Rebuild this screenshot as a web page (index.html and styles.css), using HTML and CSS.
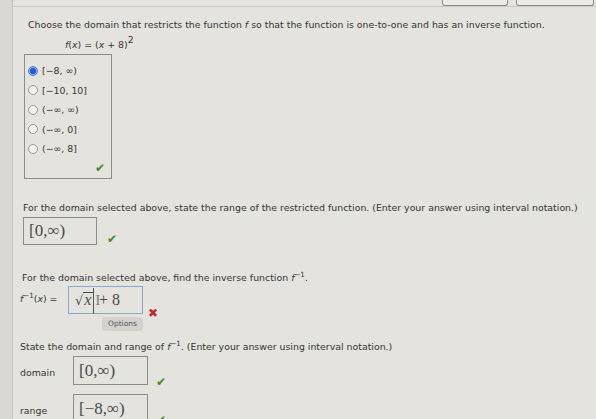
FILE: index.html
```html
<!DOCTYPE html>
<html>
<head>
<meta charset="utf-8">
<link rel="stylesheet" href="styles.css">
</head>
<body>
<div class="page">
  <div class="sidebar"></div>
  <div class="content">
    <div class="topbar">
      <div class="tbtn tbtn1"></div>
      <div class="tbtn tbtn2"></div>
    </div>
    <p class="q q1">Choose the domain that restricts the function <i>f</i> so that the function is one-to-one and has an inverse function.</p>
    <p class="fx"><i>f</i>(<i>x</i>) = (<i>x</i> + 8)<sup>2</sup></p>
    <div class="choices">
      <div class="opt"><span class="radio on"></span><span>[−8, ∞)</span></div>
      <div class="opt"><span class="radio"></span><span>[−10, 10]</span></div>
      <div class="opt"><span class="radio"></span><span>(−∞, ∞)</span></div>
      <div class="opt"><span class="radio"></span><span>(−∞, 0]</span></div>
      <div class="opt"><span class="radio"></span><span>(−∞, 8]</span></div>
      <div class="choice-foot"><span class="check">✔</span></div>
    </div>
    <p class="q q2">For the domain selected above, state the range of the restricted function. (Enter your answer using interval notation.)</p>
    <div class="ansrow r1">
      <div class="ans">[0,∞)</div>
      <span class="check">✔</span>
    </div>
    <p class="q q3">For the domain selected above, find the inverse function <i>f</i><sup>−1</sup>.</p>
    <div class="invrow">
      <span class="lbl-f"><i>f</i><sup>−1</sup>(<i>x</i>) =</span>
      <div class="invcol">
        <div class="ans active"><span class="rad">√<span class="radx">x</span></span><span class="ibeam">I</span>+ 8</div>
        <div class="optbtn">Options</div>
      </div>
      <span class="cross">✖</span>
    </div>
    <p class="q q4">State the domain and range of <i>f</i><sup>−1</sup>. (Enter your answer using interval notation.)</p>
    <div class="dr">
      <span class="lbl">domain</span>
      <div class="ans">[0,∞)</div>
      <span class="check">✔</span>
    </div>
    <div class="dr dr2">
      <span class="lbl">range</span>
      <div class="ans">[−8,∞)</div>
      <span class="check">✔</span>
    </div>
  </div>
</div>
</body>
</html>
```
FILE: styles.css
```css
html, body {
  margin: 0;
  padding: 0;
  background: #e4e3de;
  height: 100%;
  overflow: hidden;
}
.page {
  display: flex;
  height: 419px;
  font-family: "DejaVu Sans", Verdana, sans-serif;
  font-size: 9.4px;
  color: #353535;
}
.sidebar {
  width: 12px;
  background: #d9d8d3;
  border-right: 1px solid #c2c1bc;
  flex: none;
}
.content {
  flex: 1;
  display: flex;
  flex-direction: column;
  align-items: flex-start;
}
.topbar {
  align-self: stretch;
  height: 9px;
  border-bottom: 1px solid #c9c8c3;
  display: flex;
  justify-content: flex-end;
  gap: 8px;
  padding-right: 2px;
}
.tbtn {
  height: 5px;
  border: 1px solid #8c8b88;
  border-top: none;
  border-radius: 0 0 3px 3px;
  background: #ebeae6;
}
.tbtn1 { width: 64px; }
.tbtn2 { width: 76px; }
p { margin: 0; }
i { font-style: italic; }
sup { font-size: 0.75em; line-height: 0; vertical-align: 0.5em; }
.q { white-space: nowrap; line-height: 12px; }
.q1 { margin: 12px 0 0 15px; }
.fx { margin: 8px 0 0 52px; line-height: 12px; }
.fx sup { font-size: 1em; }
.choices {
  margin: 3px 0 0 11px;
  width: 86px;
  border: 1px solid #8d8c89;
  padding: 6px 0 0 0;
  display: flex;
  flex-direction: column;
}
.opt {
  display: flex;
  align-items: center;
  gap: 4px;
  height: 19.5px;
  padding-left: 3px;
}
.radio {
  width: 8px;
  height: 8px;
  border-radius: 50%;
  border: 1px solid #9a9a98;
  background: #f3f2ee;
  flex: none;
}
.radio.on {
  border-color: #4d78d6;
  background: radial-gradient(circle, #1f5bd8 0 2.8px, #9bb6ee 3.4px);
}
.choice-foot {
  height: 19px;
  display: flex;
  justify-content: flex-end;
  align-items: flex-start;
  padding-right: 6px;
  padding-top: 3px;
  box-sizing: border-box;
}
.check {
  color: #3f8c2c;
  font-size: 12px;
  line-height: 12px;
}
.q2 { margin: 23px 0 0 10px; }
.ansrow {
  display: flex;
  align-items: flex-end;
  gap: 10px;
  margin: 3px 0 0 10px;
}
.ans {
  width: 74px;
  height: 28px;
  border: 1px solid #8d8c89;
  box-sizing: border-box;
  font-family: "Liberation Serif", "Times New Roman", serif;
  font-size: 17px;
  line-height: 26px;
  padding-left: 5px;
  color: #4a4a4a;
  white-space: nowrap;
}
.q3 { margin: 27px 0 0 9px; }
.invrow {
  display: flex;
  align-items: flex-start;
  margin: 2px 0 0 7px;
}
.lbl-f { margin-top: 7px; width: 48px; }
.invcol {
  display: flex;
  flex-direction: column;
  align-items: flex-end;
}
.ans.active {
  border-color: #8aa8cf;
  width: 75px;
  padding-left: 6px;
  font-size: 16px;
}
.rad { font-family: "DejaVu Sans", sans-serif; font-size: 13px; }
.radx {
  border-top: 1px solid #4a4a4a;
  font-family: "Liberation Serif", serif;
  font-style: italic;
  font-size: 16px;
  line-height: 14px;
  display: inline-block;
  padding: 0 2px 0 1px;
}
.ibeam {
  display: inline-block;
  font-family: "Liberation Serif", serif;
  font-size: 14px;
  border-left: 1px solid #555;
  padding-left: 1px;
  color: #777;
  margin-right: -1px;
}
.optbtn {
  margin-top: 3px;
  background: #d3d2ce;
  border-radius: 3px;
  font-size: 7.5px;
  line-height: 14px;
  color: #555;
  width: 41px;
  text-align: center;
}
.cross {
  color: #c3282b;
  font-size: 12px;
  margin: 20px 0 0 5px;
}
.q4 { margin: 10px 0 0 7px; }
.dr {
  display: flex;
  align-items: flex-end;
  margin: 3px 0 0 7px;
}
.dr .lbl { width: 53px; align-self: center; margin-top: 5px; }
.dr .ans { width: 75px; height: 29px; line-height: 27px; }
.dr .check { margin-left: 8px; margin-bottom: -3px; }
.dr2 { margin-top: 9px; }
```
